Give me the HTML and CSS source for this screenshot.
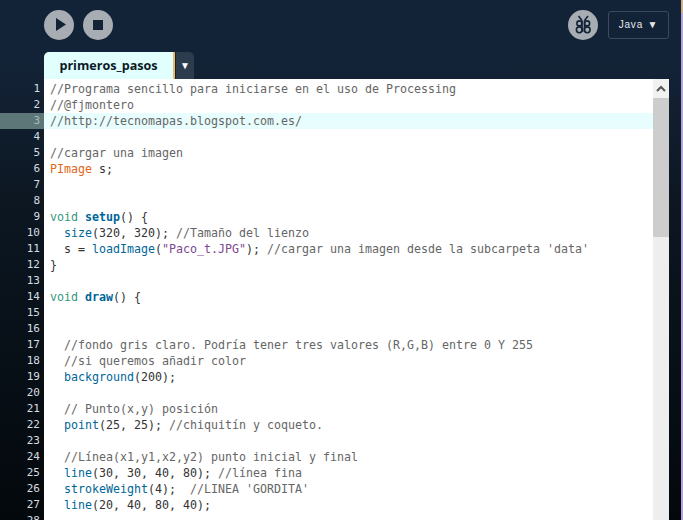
FILE: index.html
```html
<!DOCTYPE html>
<html lang="es">
<head>
<meta charset="utf-8">
<title>primeros_pasos</title>
<link rel="stylesheet" href="styles.css">
</head>
<body>
<div class="window">
  <div class="main">
  <header class="toolbar">
    <div class="controls">
      <button class="round"><svg width="30" height="30" viewBox="0 0 30 30"><path d="M12 8 L22 14.5 L12 21 Z" fill="#132337"/></svg></button>
      <button class="round"><svg width="30" height="30" viewBox="0 0 30 30"><rect x="10" y="10" width="10" height="10" fill="#132337"/></svg></button>
    </div>
    <div class="modes">
      <button class="round"><svg width="30" height="30" viewBox="0 0 30 30" fill="none" stroke="#132337" stroke-width="1.6"><path d="M10.5 6 L14 10.5 M20 6 L16.5 10.5"/><path d="M14 10.5 V22 M16.5 10.5 V22"/><circle cx="11.4" cy="13.4" r="2.5"/><circle cx="11.3" cy="19.8" r="2.9"/><circle cx="19.1" cy="13.4" r="2.5"/><circle cx="19.2" cy="19.8" r="2.9"/></svg></button>
      <div class="mode">Java <span class="arrow">▼</span></div>
    </div>
  </header>
  <div class="tabs">
    <div class="tab">primeros_pasos</div>
    <div class="tabmenu">▼</div>
  </div>
  <div class="editor">
    <div class="gutter">
      <div class="num">1</div><div class="num">2</div><div class="num current">3</div><div class="num">4</div><div class="num">5</div><div class="num">6</div><div class="num">7</div><div class="num">8</div><div class="num">9</div><div class="num">10</div><div class="num">11</div><div class="num">12</div><div class="num">13</div><div class="num">14</div><div class="num">15</div><div class="num">16</div><div class="num">17</div><div class="num">18</div><div class="num">19</div><div class="num">20</div><div class="num">21</div><div class="num">22</div><div class="num">23</div><div class="num">24</div><div class="num">25</div><div class="num">26</div><div class="num">27</div><div class="num">28</div>
    </div>
    <div class="code">
      <div class="line c">//Programa sencillo para iniciarse en el uso de Processing</div>
      <div class="line c">//@fjmontero</div>
      <div class="line c active">//http://tecnomapas.blogspot.com.es/</div>
      <div class="line"></div>
      <div class="line c">//cargar una imagen</div>
      <div class="line"><span class="t">PImage</span> s;</div>
      <div class="line"></div>
      <div class="line"></div>
      <div class="line"><span class="k">void</span> <b class="f">setup</b>() {</div>
      <div class="line">  <span class="f">size</span>(320, 320); <span class="c">//Tamaño del lienzo</span></div>
      <div class="line">  s = <span class="f">loadImage</span>(<span class="s">"Paco_t.JPG"</span>); <span class="c">//cargar una imagen desde la subcarpeta 'data'</span></div>
      <div class="line">}</div>
      <div class="line"></div>
      <div class="line"><span class="k">void</span> <b class="f">draw</b>() {</div>
      <div class="line"></div>
      <div class="line"></div>
      <div class="line c">  //fondo gris claro. Podría tener tres valores (R,G,B) entre 0 Y 255</div>
      <div class="line c">  //si queremos añadir color</div>
      <div class="line">  <span class="f">background</span>(200);</div>
      <div class="line"></div>
      <div class="line c">  // Punto(x,y) posición</div>
      <div class="line">  <span class="f">point</span>(25, 25); <span class="c">//chiquitín y coqueto.</span></div>
      <div class="line"></div>
      <div class="line c">  //Línea(x1,y1,x2,y2) punto inicial y final</div>
      <div class="line">  <span class="f">line</span>(30, 30, 40, 80); <span class="c">//línea fina</span></div>
      <div class="line">  <span class="f">strokeWeight</span>(4);  <span class="c">//LINEA 'GORDITA'</span></div>
      <div class="line">  <span class="f">line</span>(20, 40, 80, 40);</div>
      <div class="line"></div>
    </div>
    <div class="scrollbar">
      <div class="up"><svg width="12" height="10" viewBox="0 0 12 10"><path d="M2 7 L6 3 L10 7" fill="none" stroke="#555" stroke-width="2"/></svg></div>
      <div class="thumb"></div>
    </div>
  </div>
  </div>
  <div class="edge"></div>
</div>
</body>
</html>
```
FILE: styles.css
```css
* { box-sizing: border-box; }
html, body { margin: 0; height: 100%; }
body { background: #0d1a27; overflow: hidden; }
.window { width: 683px; height: 520px; display: flex; }
.main {
  width: 681px; height: 520px; display: flex; flex-direction: column;
  padding-right: 12px;
  background: linear-gradient(#132337 0, #132337 60px, #0c1722 200px, #03080c 520px);
}
.edge { width: 2px; background: linear-gradient(#c9b38f 0, #c9b38f 13px, #b3a5d8 13px); }
.toolbar { height: 52px; padding-bottom: 3px; display: flex; justify-content: space-between; align-items: center; padding-left: 44px; flex: none; }
.controls, .modes { display: flex; align-items: center; gap: 9px; }
.modes { gap: 10px; }
.round { width: 30px; height: 30px; border-radius: 50%; background: #a8adb3; border: 0; padding: 0; display: block; }
.round svg { display: block; }
.mode { width: 61px; height: 28px; border: 1px solid #3c4a5b; border-radius: 3px; color: #e6e9ec; font: 10px/26px "Liberation Sans", sans-serif; letter-spacing: .8px; text-align: center; }
.arrow { font-size: 10px; margin-left: 1px; }
.tabs { height: 27px; display: flex; padding-left: 44px; flex: none; }
.tab { width: 131px; background: #e0fffd; border-radius: 5px 0 0 0; border-right: 2px solid #eeb966; color: #0d1a27; font: bold 12.6px/27px "Open Sans", sans-serif; text-align: center; }
.tabmenu { width: 18px; margin-left: 1px; background: #2c3c4c; border-radius: 0 5px 0 0; color: #fff; font: 10px/28px "Liberation Sans", sans-serif; text-align: center; }
.editor { flex: 1; display: flex; min-height: 0; overflow: hidden; }
.gutter { width: 44px; flex: none; padding-top: 2px; }
.num { height: 16px; font: 11px/16px "DejaVu Sans Mono", monospace; color: #d6dde0; text-align: right; padding-right: 4px; }
.num.current { background: #5d7678; color: #a8bcbc; }
.code { flex: 1; background: #fff; padding-top: 2px; font: 11.63px/16px "DejaVu Sans Mono", monospace; color: #333; min-width: 0; }
.line { height: 16px; padding-left: 6px; white-space: pre; }
.line.active { background: #e8fdfd; }
.c { color: #666; }
.k { color: #33997e; }
.f { color: #006699; }
.t { color: #e2661a; }
.s { color: #7d4793; }
.scrollbar { width: 16px; flex: none; background: #eeeeee; display: flex; flex-direction: column; }
.up { height: 19px; display: flex; align-items: center; justify-content: center; background: #f1f1f1; }
.thumb { height: 139px; background: #cdcdcd; }
```
